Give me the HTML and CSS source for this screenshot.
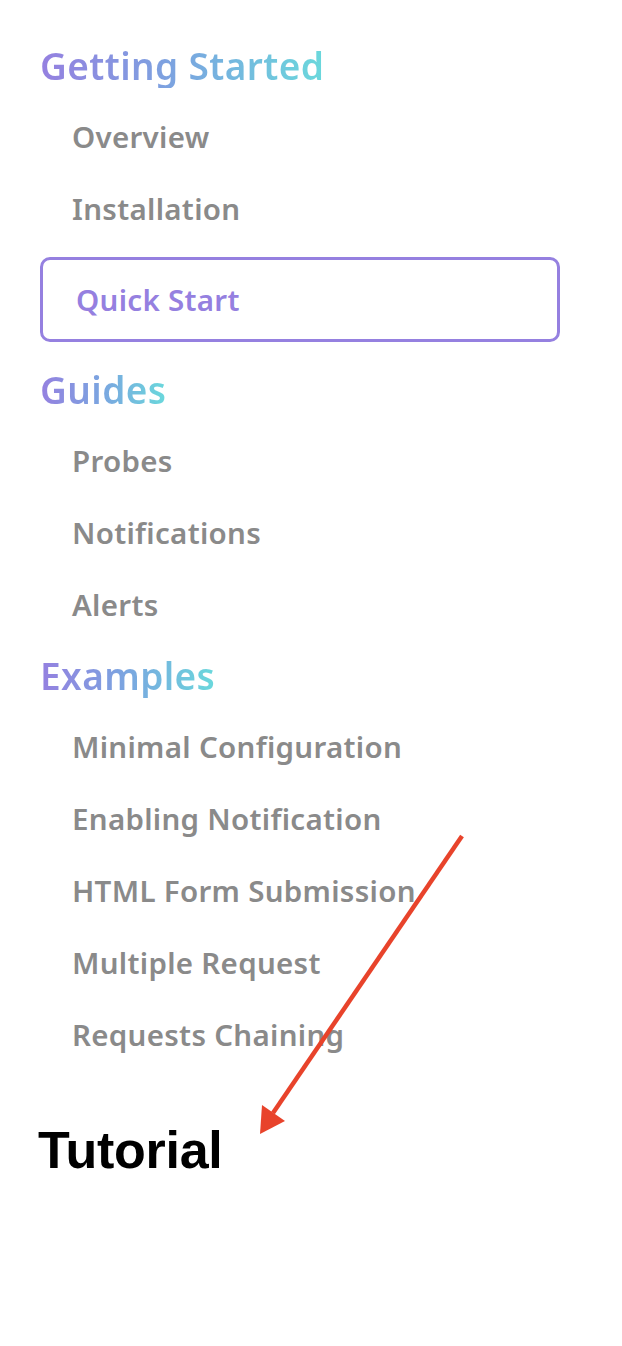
FILE: index.html
```html
<!DOCTYPE html>
<html lang="en">
<head>
<meta charset="utf-8">
<title>Docs navigation</title>
<link rel="stylesheet" href="styles.css">
</head>
<body>
<div class="page">
  <nav class="sidebar">
    <div class="section">
      <h2 class="section-title"><span>Getting Started</span></h2>
      <a class="item">Overview</a>
      <a class="item">Installation</a>
      <a class="item active">Quick Start</a>
    </div>
    <div class="section">
      <h2 class="section-title"><span>Guides</span></h2>
      <a class="item">Probes</a>
      <a class="item">Notifications</a>
      <a class="item">Alerts</a>
    </div>
    <div class="section">
      <h2 class="section-title"><span>Examples</span></h2>
      <a class="item">Minimal Configuration</a>
      <a class="item">Enabling Notification</a>
      <a class="item">HTML Form Submission</a>
      <a class="item">Multiple Request</a>
      <a class="item">Requests Chaining</a>
    </div>
  </nav>
  <div class="tutorial">Tutorial</div>
  <svg class="annotation" width="622" height="1346" viewBox="0 0 622 1346" aria-hidden="true">
    <line x1="462" y1="836" x2="273" y2="1113" stroke="#e8432b" stroke-width="4.5" stroke-linecap="butt"/>
    <polygon points="260,1134 262,1105 285,1121" fill="#e8432b"/>
  </svg>
</div>
</body>
</html>
```
FILE: styles.css
```css
html, body {
  margin: 0;
  padding: 0;
  background: #ffffff;
}

.page {
  position: relative;
  width: 622px;
  min-height: 1346px;
}

.sidebar {
  display: flex;
  flex-direction: column;
  width: 520px;
  padding: 31px 0 0 40px;
  font-family: "Noto Sans", "Open Sans", sans-serif;
}

.section {
  display: flex;
  flex-direction: column;
}

.section-title {
  margin: 0;
  height: 70px;
  display: flex;
  align-items: center;
  font-size: 37px;
  font-weight: 600;
  letter-spacing: 0.4px;
}

.section-title span {
  background: linear-gradient(90deg, #9580e0 0%, #7aa6e0 50%, #6ad8dc 100%);
  -webkit-background-clip: text;
  background-clip: text;
  color: transparent;
  -webkit-text-fill-color: transparent;
  line-height: 1.2;
}

.item {
  display: block;
  height: 72px;
  line-height: 72px;
  padding-left: 32px;
  font-size: 29.5px;
  letter-spacing: 0.3px;
  font-weight: 600;
  color: #8a8a8a;
  white-space: nowrap;
}

.item.active {
  height: 79px;
  line-height: 79px;
  margin: 12px 0 13px;
  border: 3px solid #9580e0;
  border-radius: 10px;
  padding-left: 33px;
  color: #9580e0;
}

.tutorial {
  margin: 49px 0 0 38px;
  font-family: "Liberation Sans", Arial, sans-serif;
  font-weight: 700;
  font-size: 52px;
  line-height: 60px;
  letter-spacing: -0.3px;
  color: #000000;
}

.annotation {
  position: absolute;
  left: 0;
  top: 0;
  pointer-events: none;
}
```
